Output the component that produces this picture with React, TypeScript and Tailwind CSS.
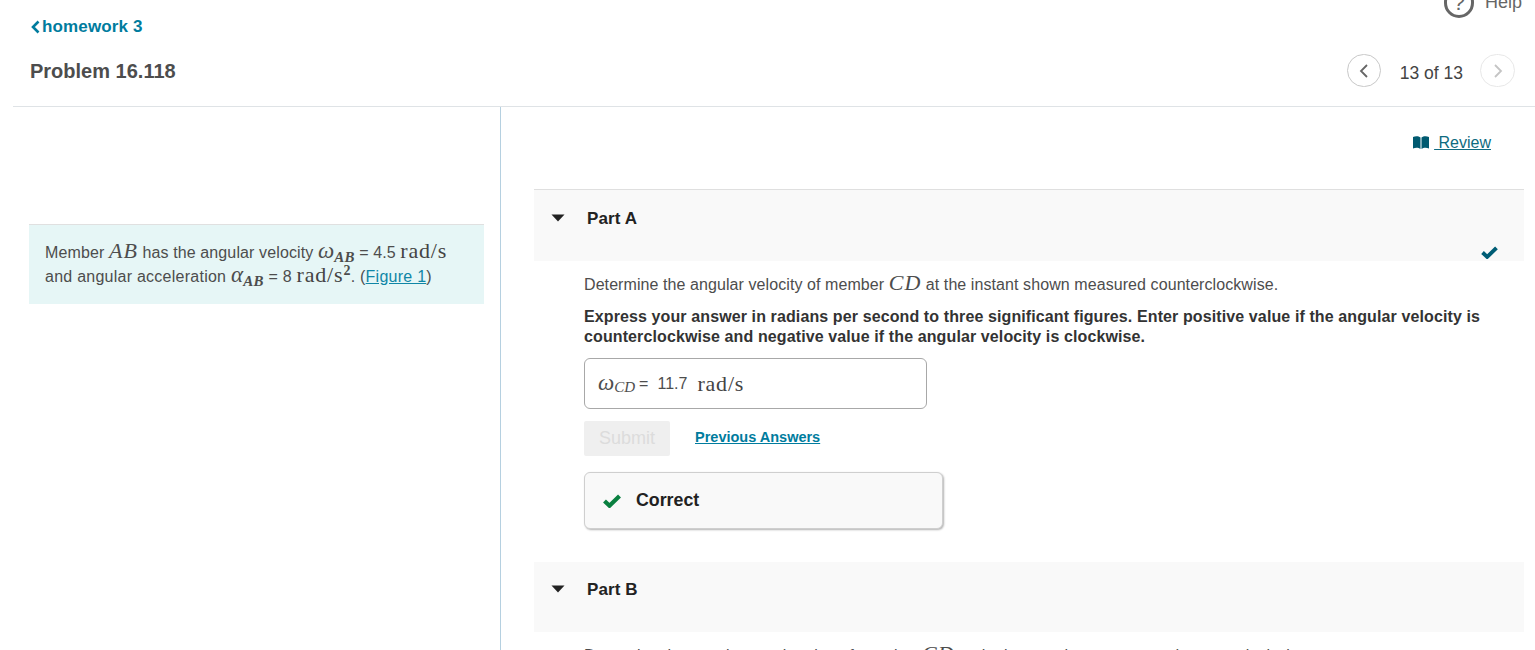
const sans = { fontFamily: '"Liberation Sans", Arial, sans-serif' };

const M = ({ children, className = '' }: { children: React.ReactNode; className?: string }) => (
  <span className={`font-['Liberation_Serif'] italic ${className}`}>{children}</span>
);

const Rad = ({ className = '' }: { className?: string }) => (
  <span className={`font-['Liberation_Serif'] text-[22px] tracking-[0.8px] text-[#444] ${className}`}>rad/s</span>
);

const Caret = () => (
  <svg width="14" height="8" viewBox="0 0 14 8" className="shrink-0">
    <path d="M0.5 0.5h13L7 7.5z" fill="#222" />
  </svg>
);

const Check = ({ color, w, h }: { color: string; w: number; h: number }) => (
  <svg width={w} height={h} viewBox="0 0 18 14">
    <path d="M1.5 7l5 4.700L16.500 2" fill="none" stroke={color} strokeWidth="4.200" />
  </svg>
);

const PartHeader = ({ label, className, extra }: { label: string; className: string; extra?: React.ReactNode }) => (
  <div className={`relative flex items-start bg-[#f9f9f9] pl-[17px] ${className}`}>
    <div className="mt-[5px]"><Caret /></div>
    <span className="ml-[22px] text-[17px] font-bold leading-[20px] tracking-[0.1px] text-[#222]">{label}</span>
    {extra}
  </div>
);

export default function App() {
  return (
    <div className="h-[650px] w-[1535px] overflow-hidden bg-white text-[#4a4a4a]" style={sans}>
      <header className="ml-[13px] h-[107px] border-b border-[#dfe3e6] pl-[17px]">
        <div className="flex h-[20px] justify-end">
          <div className="mt-[-13px] flex h-[31px] items-start pr-[13px]">
            <div className="flex h-[31px] w-[30px] items-center justify-center rounded-full border-[3px] border-[#666] text-[22px] leading-none text-[#666]">?</div>
            <span className="ml-[11px] mt-[5px] text-[18px] leading-[20px] text-[#666]">Help</span>
          </div>
        </div>
        <div className="-mt-[3px] flex h-[20px] items-center text-[#007c9e]">
          <svg width="11" height="14" viewBox="0 0 11 14">
            <path d="M8.5 1.5L3 7l5.500 5.500" fill="none" stroke="#007c9e" strokeWidth="2.600" />
          </svg>
          <span className="ml-[1px] text-[17px] font-bold leading-[20px] tracking-[0.15px]">homework 3</span>
        </div>
        <div className="mt-[17px] flex items-center justify-between pr-[20px]">
          <h1 className="text-[20px] font-bold leading-[24px] text-[#4d4d4d]">Problem 16.118</h1>
          <div className="flex items-center">
            <div className="flex h-[33px] w-[34px] items-center justify-center rounded-full border border-[#c8c8c8]">
              <svg width="12" height="16" viewBox="0 0 12 16"><path d="M9 2L3 8l6 6" fill="none" stroke="#666" strokeWidth="1.800" /></svg>
            </div>
            <span className="ml-[19px] mr-[17px] mt-[4px] text-[17.500px] leading-[22px] text-[#444]">13 of 13</span>
            <div className="flex h-[33px] w-[35px] items-center justify-center rounded-full border border-[#e8e8e8]">
              <svg width="12" height="16" viewBox="0 0 12 16"><path d="M3 2l6 6-6 6" fill="none" stroke="#c4c4c4" strokeWidth="1.800" /></svg>
            </div>
          </div>
        </div>
      </header>

      <div className="ml-[13px] flex h-[543px]">
        <aside className="w-[488px] shrink-0 border-r border-[#b5d0e0] pt-[117px] pl-[16px] pr-[16px]">
          <div className="h-[80px] border-t border-[#e0e0e0] bg-[#e6f6f6] px-[16px] pt-[14px] text-[16px] leading-[24px] text-[#4d4d4d]">
            <div className="h-[24px] whitespace-nowrap tracking-[0.12px]">
              Member <M className="text-[22px] tracking-[1px]">AB</M> has the angular velocity <M className="text-[23px]">ω</M><M className="relative top-[4px] text-[15px] font-bold">AB</M> = 4.5 <Rad />
            </div>
            <div className="h-[24px] whitespace-nowrap tracking-[0.25px]">
              and angular acceleration <M className="text-[23px]">α</M><M className="relative top-[4px] text-[15px] font-bold">AB</M> = 8 <Rad /><sup className="text-[14px] font-['Liberation_Serif'] font-bold">2</sup>. (<a className="text-[#0f86a6] underline">Figure 1</a>)
            </div>
          </div>
        </aside>

        <main className="min-w-0 flex-1 pl-[33px] pr-[11px]">
          <div className="flex h-[82px] justify-end pt-[26px] pr-[33px]">
            <a className="flex h-[19px] items-center whitespace-pre text-[16px] leading-[19px] text-[#0f6b80] underline">
              <svg width="16" height="13" viewBox="0 0 16 13" className="mr-[5px]">
                <path d="M0 1C2.500 0 5.500 0 7.500 1.500V13C5.500 11.500 2.500 11.500 0 12.500zM8.500 1.500C10.500 0 13.500 0 16 1V12.500C13.500 11.500 10.500 11.500 8.500 13z" fill="#005a70" />
              </svg>
              {' Review'}
            </a>
          </div>
          <div className="border-t border-[#dfdfdf]">
            <PartHeader
              label="Part A"
              className="h-[71px] pt-[19px]"
              extra={
                <div className="absolute right-[26px] top-[56px]">
                  <Check color="#005d75" w={17} h={13} />
                </div>
              }
            />
          </div>
          <div className="pl-[50px]">
            <p className="mt-[10px] text-[16px] leading-[24px] tracking-[0.08px] text-[#4d4d4d]">
              Determine the angular velocity of member <M className="text-[22px] tracking-[1px]">CD</M> at the instant shown measured counterclockwise.
            </p>
            <p className="mt-[10px] text-[16px] font-bold leading-[20px] tracking-[0.11px] text-[#333]">
              Express your answer in radians per second to three significant figures. Enter positive value if the angular velocity is counterclockwise and negative value if the angular velocity is clockwise.
            </p>
            <div className="mt-[11px] flex h-[51px] w-[343px] items-center rounded-[6px] border border-[#a8a8a8] pl-[13px] text-[16px] text-[#4d4d4d]">
              <M className="text-[23px]">ω</M><M className="relative top-[4px] text-[15px]">CD</M>
              <span className="ml-[4px]">=</span>
              <span className="ml-[9px]">11.7</span>
              <Rad className="ml-[10px]" />
            </div>
            <div className="mt-[11px] flex h-[36px] items-center">
              <div className="flex h-[35px] w-[86px] items-center justify-center rounded-[2px] bg-[#efefef] text-[18px] text-[#dcdcdc]">Submit</div>
              <a className="ml-[25px] text-[14.500px] font-bold text-[#007c9e] underline">Previous Answers</a>
            </div>
            <div className="mt-[16px] flex h-[57px] w-[359px] items-center rounded-[6px] border border-[#cfcfcf] bg-[#f9f9f9] pl-[18px] shadow-[1px_1px_2px_rgba(0,0,0,0.3)]">
              <Check color="#0a8040" w={18} h={14} />
              <span className="ml-[15px] text-[17.800px] font-bold text-[#222]">Correct</span>
            </div>
          </div>
          <div className="mt-[33px]">
            <PartHeader label="Part B" className="h-[70px] pt-[18px]" />
          </div>
          <p className="mt-[10px] pl-[50px] text-[16px] leading-[24px] tracking-[0.08px] text-[#4d4d4d]">
            Determine the angular acceleration of member <M className="text-[22px] tracking-[1px]">CD</M> at the instant shown measured counterclockwise.
          </p>
        </main>
      </div>
    </div>
  );
}
